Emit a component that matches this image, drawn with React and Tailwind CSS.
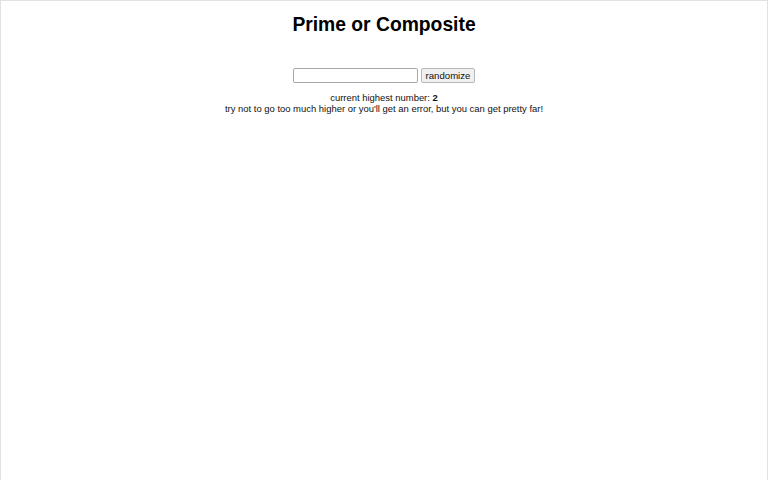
import { useState } from "react";

export default function App() {
  const [value, setValue] = useState("");
  const highest = 2;

  return (
    <div className="w-[768px] h-[480px] bg-white border border-[#e2e2e2] border-b-0 font-['Liberation_Sans',Arial,sans-serif] text-black">
      <h1 className="mt-[12px] text-center text-[19.3px] leading-[23px] font-bold">Prime or Composite</h1>

      {/* input + randomize */}
      <div className="mt-[32px] flex justify-center items-center gap-[3px]">
        <input
          value={value}
          onChange={e => setValue(e.target.value)}
          className="w-[125px] h-[15px] border border-[#a8a8a8] rounded-[2px] bg-white px-1 text-[10px] outline-none"
        />
        <button className="h-[15px] px-[4px] border border-[#b8b8b8] rounded-[2px] bg-[#f0f0f0] text-[9.6px] leading-[13px] text-[#111]">
          randomize
        </button>
      </div>

      <div className="mt-[9px] text-center text-[9.45px] leading-[11px] text-[#111]">
        <p>
          current highest number: <b>{highest}</b>
        </p>
        <p>try not to go too much higher or you'll get an error, but you can get pretty far!</p>
      </div>
    </div>
  );
}
